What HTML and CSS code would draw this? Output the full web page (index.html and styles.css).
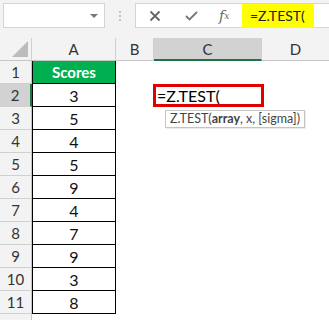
FILE: index.html
```html
<!DOCTYPE html>
<html lang="en">
<head>
    <meta charset="UTF-8">
    <title>Z.TEST</title>
    <link rel="stylesheet" href="styles.css">
</head>
<body>
    <div class="toolbar">
        <div class="name-box"><span class="caret"></span></div>
        <div class="grip"><i></i><i></i><i></i></div>
        <div class="formula-bar">
            <span class="fb-icon">
                <svg width="12" height="12" viewBox="0 0 12 12"><path d="M1.5 1.5 L10.5 10.5 M10.5 1.5 L1.5 10.5" stroke="#666" stroke-width="1.8" fill="none"/></svg>
            </span>
            <span class="fb-icon">
                <svg width="13" height="10" viewBox="0 0 13 10"><path d="M1 5 L4.5 8.5 L12 1" stroke="#777" stroke-width="1.8" fill="none"/></svg>
            </span>
            <span class="fb-icon fx">f<sub>x</sub></span>
            <span class="formula-text">=Z.TEST(</span>
        </div>
    </div>

    <div class="sheet">
        <div class="corner"><span class="triangle"></span></div>
        <div class="col-head">A</div>
        <div class="col-head">B</div>
        <div class="col-head selected">C</div>
        <div class="col-head last">D</div>

        <div class="row-head">1</div>
        <div class="cell data title">Scores</div>
        <div class="cell"></div>
        <div class="cell"></div>
        <div class="cell"></div>

        <div class="row-head selected">2</div>
        <div class="cell data">3</div>
        <div class="cell"></div>
        <div class="cell active">
            =Z.TEST(
            <div class="tooltip">Z.TEST(<b>array</b>, x, [sigma])</div>
        </div>
        <div class="cell"></div>

        <div class="row-head">3</div>
        <div class="cell data">5</div>
        <div class="cell"></div><div class="cell"></div><div class="cell"></div>

        <div class="row-head">4</div>
        <div class="cell data">4</div>
        <div class="cell"></div><div class="cell"></div><div class="cell"></div>

        <div class="row-head">5</div>
        <div class="cell data">5</div>
        <div class="cell"></div><div class="cell"></div><div class="cell"></div>

        <div class="row-head">6</div>
        <div class="cell data">9</div>
        <div class="cell"></div><div class="cell"></div><div class="cell"></div>

        <div class="row-head">7</div>
        <div class="cell data">4</div>
        <div class="cell"></div><div class="cell"></div><div class="cell"></div>

        <div class="row-head">8</div>
        <div class="cell data">7</div>
        <div class="cell"></div><div class="cell"></div><div class="cell"></div>

        <div class="row-head">9</div>
        <div class="cell data">9</div>
        <div class="cell"></div><div class="cell"></div><div class="cell"></div>

        <div class="row-head">10</div>
        <div class="cell data">3</div>
        <div class="cell"></div><div class="cell"></div><div class="cell"></div>

        <div class="row-head">11</div>
        <div class="cell data">8</div>
        <div class="cell"></div><div class="cell"></div><div class="cell"></div>

        <!-- ligne 12, coupée par le bas -->
        <div class="row-head"></div>
        <div class="cell"></div>
        <div class="cell"></div><div class="cell"></div><div class="cell"></div>
    </div>
</body>
</html>
```

FILE: styles.css
```css
* {
    margin: 0;
    padding: 0;
    box-sizing: border-box;
}

body {
    font-family: Lato, 'Liberation Sans', sans-serif;
    background: #fff;
    width: 329px;
    height: 320px;
    overflow: hidden;
}

/* barre de formule */
.toolbar {
    height: 38px;
    background: #f3f3f3;
    display: flex;
    align-items: flex-start;
    padding: 3px 0 0 3px;
}

.name-box {
    width: 102px;
    height: 25px;
    background: #fff;
    border: 1px solid #d4d4d4;
    position: relative;
}

.caret {
    position: absolute;
    right: 6px;
    top: 10px;
    border-left: 4px solid transparent;
    border-right: 4px solid transparent;
    border-top: 4px solid #777;
}

.grip {
    width: 30px;
    height: 25px;
    display: flex;
    flex-direction: column;
    align-items: center;
    justify-content: center;
    gap: 2px;
}

.grip i {
    width: 2px;
    height: 2px;
    background: #c4c4c4;
}

.formula-bar {
    flex: 1;
    height: 25px;
    background: #fff;
    border: 1px solid #d4d4d4;
    border-right: none;
    display: flex;
    align-items: center;
}

.fb-icon {
    width: 37px;
    display: flex;
    justify-content: center;
    align-items: center;
}

.fx {
    font-family: 'DejaVu Serif', 'Liberation Serif', serif;
    font-style: italic;
    font-size: 14px;
    color: #666;
    width: 32px;
    justify-content: flex-start;
    padding-left: 9px;
}

.fx sub {
    font-size: 9px;
}

.formula-text {
    background: #ffff00;
    height: 24px;
    width: 72px;
    padding-left: 8px;
    font-size: 14px;
    line-height: 24px;
    color: #222;
}

/* feuille */
.sheet {
    display: grid;
    grid-template-columns: 32px 84px 38px 108px 67px;
    grid-auto-rows: 23px;
    background: #fff;
}

.corner,
.col-head {
    background: #f3f3f3;
    border-right: 1px solid #d0d0d0;
    border-bottom: 1px solid #c6c6c6;
}

.corner {
    position: relative;
}

.triangle {
    position: absolute;
    right: 3px;
    bottom: 3px;
    width: 16px;
    height: 16px;
    background: #bcbcbc;
    clip-path: polygon(100% 0, 100% 100%, 0 100%);
}

.col-head {
    display: flex;
    align-items: center;
    justify-content: center;
    font-size: 15px;
    color: #333;
}

.col-head.selected {
    background: #d2d2d2;
    border-bottom: 2px solid #217346;
    color: #333;
}

.col-head.last {
    border-right: none;
}

.row-head {
    background: #f3f3f3;
    border-bottom: 1px solid #d0d0d0;
    border-right: 1px solid #c6c6c6;
    display: flex;
    align-items: center;
    justify-content: center;
    font-size: 15px;
    color: #333;
}

.row-head.selected {
    background: #d2d2d2;
    border-right: 2px solid #217346;
}

.cell {
    font-size: 16px;
    color: #111;
    display: flex;
    align-items: center;
}

.cell.data {
    justify-content: center;
    border-left: 1px solid #000;
    border-right: 1px solid #000;
    border-bottom: 1px solid #000;
}

.cell.title {
    background: #00b050;
    color: #fff;
    font-weight: bold;
    font-size: 15px;
}

.cell.active {
    position: relative;
    border: 3px solid #e00000;
    margin: 0 -2px 0 -1px;
    padding-left: 1px;
    font-size: 16px;
    color: #000;
}

.tooltip {
    position: absolute;
    left: 9px;
    top: 23px;
    white-space: nowrap;
    background: #fff;
    border: 1px solid #c4c4c4;
    padding: 0 4px;
    font-size: 12.5px;
    line-height: 16px;
    color: #444;
    box-shadow: 1px 1px 1px rgba(0, 0, 0, 0.08);
}

.tooltip b {
    font-weight: bold;
    color: #444;
}
```
